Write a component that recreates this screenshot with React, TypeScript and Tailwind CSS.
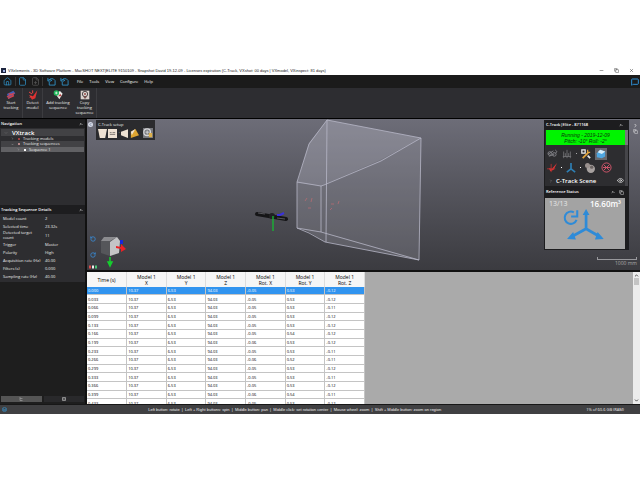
import React from "react";
import { ChevronDown, ChevronLeft, ChevronRight, ChevronUp, Eye, File, FilePlus, Home, Layers, MessageSquare, Minus, RotateCcw, RotateCw, X, Copy } from "lucide-react";

const details = [
  { label: "Model count", value: "2" },
  { label: "Selected time", value: "23.32s" },
  { label: "Detected target count", value: "11" },
  { label: "Trigger", value: "Master" },
  { label: "Polarity", value: "High" },
  { label: "Acquisition rate (Hz)", value: "40.00" },
  { label: "Filters (s)", value: "0.000" },
  { label: "Sampling rate (Hz)", value: "40.00" },
];

const columns = [
  ["Time (s)"],
  ["Model 1", "X"],
  ["Model 1", "Y"],
  ["Model 1", "Z"],
  ["Model 1", "Rot. X"],
  ["Model 1", "Rot. Y"],
  ["Model 1", "Rot. Z"],
];

const rows = [
  ["0.000", "10.37", "6.53", "94.03", "-0.05", "0.53", "-0.12"],
  ["0.033", "10.37", "6.53", "94.03", "-0.05", "0.53", "-0.12"],
  ["0.066", "10.37", "6.53", "94.03", "-0.05", "0.53", "-0.11"],
  ["0.099", "10.37", "6.53", "94.03", "-0.05", "0.53", "-0.12"],
  ["0.133", "10.37", "6.53", "94.03", "-0.05", "0.53", "-0.12"],
  ["0.166", "10.37", "6.53", "94.03", "-0.05", "0.54", "-0.12"],
  ["0.199", "10.37", "6.53", "94.03", "-0.06", "0.53", "-0.12"],
  ["0.233", "10.37", "6.53", "94.03", "-0.05", "0.53", "-0.11"],
  ["0.266", "10.37", "6.53", "94.03", "-0.06", "0.52", "-0.11"],
  ["0.299", "10.37", "6.53", "94.03", "-0.05", "0.53", "-0.12"],
  ["0.333", "10.37", "6.53", "94.03", "-0.05", "0.53", "-0.11"],
  ["0.366", "10.37", "6.53", "94.03", "-0.05", "0.53", "-0.12"],
  ["0.399", "10.37", "6.53", "94.03", "-0.06", "0.54", "-0.11"],
  ["0.433", "10.37", "6.53", "94.03", "-0.05", "0.53", "-0.12"],
];

const TitleBar = () => (
  <header className="flex h-[9px] shrink-0 items-center bg-white pl-px text-[#222]">
    <span className="flex size-[5px] items-center justify-center bg-[#1d2540]">
      <span className="size-[2px] bg-[#9fb2e0]" />
    </span>
    <h1 className="ml-[2px] whitespace-nowrap font-['Liberation_Sans',sans-serif]">
      VXelements - 3D Software Platform - MacSHOT NEXT|ELITE 9150109 - Snapshot David 19-12-09 - Licenses expiration (C-Track, VXshot: 00 days | VXmodel, VXinspect: 81 days)
    </h1>
    <div className="ml-auto flex gap-[10px] pr-[6px]">
      <button aria-label="Minimize"><Minus size={5} /></button>
      <button aria-label="Restore"><Copy size={5} /></button>
      <button aria-label="Close"><X size={5} /></button>
    </div>
  </header>
);

const SessionIcon = () => (
  <svg viewBox="0 0 20 20" className="size-[9px]" fill="none" stroke="#2f8fc4" strokeWidth="2">
    <path d="M7 4h7l4 4v10H5v-7" />
    <path d="M2 2v7h7M2 8c3-4 7-3 9 1" />
  </svg>
);

const MenuBar = () => (
  <nav className="flex h-[13px] shrink-0 items-center bg-[#1b1b1b] pl-[3px] text-white">
    <button aria-label="Home" className="text-[#2f8fc4]"><Home size={9} /></button>
    <span className="ml-[3px] h-[9px] w-px bg-[#393939]" />
    <button aria-label="New" className="ml-[2px] text-[#2f8fc4]"><File size={9} /></button>
    <button aria-label="Save" className="ml-[4px] text-[#555]"><FilePlus size={9} /></button>
    <span className="ml-[2px] h-[9px] w-px bg-[#393939]" />
    <button aria-label="Import session" className="ml-[4px]"><SessionIcon /></button>
    <button aria-label="Export session" className="ml-[4px]"><SessionIcon /></button>
    <div className="ml-[8px] flex gap-[6px]">
      <button>File</button>
      <button>Tools</button>
      <button>View</button>
      <button>Configure</button>
      <button>Help</button>
    </div>
    <button aria-label="Feedback" className="ml-auto pr-px text-[#2f8fd4]"><MessageSquare size={8} strokeWidth={3} /></button>
  </nav>
);

const Ribbon = () => (
  <div className="flex h-[31px] shrink-0 border-b border-black bg-[#2d2d31] text-center leading-[5px] text-[#eee]">
    <button className="flex w-[23px] flex-col items-center border-r border-[#3c3c40] pt-[2px]">
      <svg viewBox="0 0 30 30" className="size-[10px]">
        <path d="M3 12 22 2l6 8-20 17z" fill="#3e60b8" />
        <path d="M3 21 25 9M8 11l14 4M6 25l18-8" stroke="#d5434d" strokeWidth="4" />
      </svg>
      Start<br />tracking
    </button>
    <button className="flex w-[20px] flex-col items-center border-r border-[#3c3c40] pt-[2px]">
      <svg viewBox="0 0 30 30" className="size-[10px]">
        <path d="M3 15 15 19 28 1 22 25 12 29z" fill="#dd3232" />
        <path d="M3 6l9 6m2-11v9m-9 12 6-3" stroke="#e84242" strokeWidth="3" />
      </svg>
      Detect<br />model
    </button>
    <button className="flex w-[30px] flex-col items-center pt-[2px]">
      <svg viewBox="0 0 30 30" className="size-[10px]">
        <path d="m7 11 14-8 8 8-10 17z" fill="#ecece9" />
        <circle cx="10" cy="9" r="8" fill="#20b65a" />
        <path d="M10 5v8M6 9h8" stroke="white" strokeWidth="2" />
        <path d="m15 19 7-8 4 8z" fill="#b44545" />
      </svg>
      Add tracking<br />sequence
    </button>
    <button className="flex w-[24px] flex-col items-center border-r border-[#3c3c40] pt-[2px]">
      <svg viewBox="0 0 30 30" className="size-[10px]">
        <path d="M2 2h26v26H2z" fill="#d7d1cc" />
        <circle cx="15" cy="12" r="8" fill="none" stroke="#574f4d" strokeWidth="3" />
        <path d="m9 19 6 8 7-8" fill="#77514d" />
        <circle cx="15" cy="12" r="3" fill="#984e4b" />
      </svg>
      Copy<br />tracking<br />sequence
    </button>
  </div>
);

const PanelHeader = ({ title }: { title: string }) => (
  <div className="flex h-[9px] shrink-0 items-center justify-between bg-[#1d1d1f] pl-px pr-[2px] font-semibold text-white">
    <h2>{title}</h2>
    <button aria-label={`Collapse ${title}`}><ChevronUp size={4} strokeWidth={4} /></button>
  </div>
);

const Sidebar = () => (
  <aside className="flex w-[85px] shrink-0 flex-col bg-[#1e1e1e] text-[#eee]">
    <PanelHeader title="Navigation" />
    <div className="h-[77px] shrink-0 bg-[#2d2d30] px-px pt-px">
      <div className="flex h-[7px] items-center bg-[#424245] pl-[3px] text-[6px] font-semibold text-white">
        <ChevronDown size={4} className="mr-[4px] text-[#888]" />VXtrack
      </div>
      <div className="flex h-[5px] items-center pl-[10px]">
        <ChevronRight size={3} className="mr-[4px]" />
        <span className="mr-[3px] size-[2px] rounded-full bg-[#c84848]" />Tracking models
      </div>
      <div className="flex h-[6px] items-center bg-[#424245] pl-[10px]">
        <ChevronDown size={3} className="mr-[4px]" />
        <span className="mr-[3px] size-[2px] rounded-full bg-[#e0a0a0]" />Tracking sequences
      </div>
      <div className="flex h-[5px] items-center bg-[#616164] pl-[16px]">
        <ChevronRight size={3} className="mr-[4px]" />
        <span className="mr-[3px] size-[2px] bg-white" />Sequence 1
      </div>
    </div>
    <PanelHeader title="Tracking Sequence Details" />
    <dl className="bg-[#2d2d30] pb-[2px] pl-[3px]">
      {details.map((item) => (
        <div key={item.label} className="flex min-h-[8px] items-center leading-[5px]">
          <dt className="w-[42px] pr-[2px]">
            {item.label === "Detected target count" ? <>Detected target<br />count</> : item.label}
          </dt>
          <dd>{item.value}</dd>
        </div>
      ))}
    </dl>
    <div className="mb-[2px] mt-auto flex gap-[2px] px-px">
      <button aria-label="Tree" className="flex h-[6px] flex-1 items-center justify-center bg-[#555]">
        <svg viewBox="0 0 8 8" className="size-[4px]" fill="none" stroke="#999" strokeWidth="1.5"><path d="M2 0v7h5M2 3h5" /></svg>
      </button>
      <button aria-label="Layers" className="flex h-[6px] flex-1 items-center justify-center bg-[#29292b]">
        <svg viewBox="0 0 8 8" className="size-[4px]" fill="none" stroke="#aaa" strokeWidth="1.5"><path d="M1 1h6v6H1zM1 4h6" /></svg>
      </button>
    </div>
  </aside>
);

const TrackSetup = () => (
  <div className="flex h-[20px] w-[59px] flex-col bg-[#2b2b2e] px-[2px] pt-[2px] text-[#eee]">
    <span className="leading-[5px]">C-Track setup</span>
    <div className="mt-px flex items-center justify-between">
      <button aria-label="Front view"><svg viewBox="0 0 10 10" className="size-[9px]"><path d="M0 0h10L8 10H2z" fill="#eee1d2" /></svg></button>
      <button aria-label="Top view"><svg viewBox="0 0 10 10" className="size-[9px]"><path d="M0 0h10v10H0z" fill="#eee1d2" /><path d="M2 4h2m1 0h3M2 6h6" stroke="#78706c" /></svg></button>
      <span className="text-white">·</span>
      <button aria-label="Side view"><svg viewBox="0 0 8 10" className="h-[9px] w-[7px]"><path d="M8 0v10L0 7V3z" fill="#eee1d2" /></svg></button>
      <button aria-label="Perspective"><svg viewBox="0 0 10 10" className="size-[9px]"><path d="m1 3 5-3 4 7-9 3z" fill="#dda431" /><path d="m1 3 5-3-4 7z" fill="#eee1d2" /></svg></button>
      <button aria-label="Lock volume" className="ml-[3px] bg-[#77787d]"><svg viewBox="0 0 12 12" className="size-[10px]"><circle cx="5" cy="5" r="4" fill="none" stroke="#d7d7da" strokeWidth="1.5" /><path d="M3 5h5M5 3v5" stroke="#ddd" /><path d="M7 6h4v5H7z" fill="#ddb14b" /></svg></button>
    </div>
  </div>
);

const Axes = () => (
  <svg viewBox="0 0 64 50" className="h-[34px] w-[44px]" fill="none" stroke="#2e8bd8">
    <path d="M38 29V7M38 29 18 40M38 29l19 11" strokeWidth="4" />
    <path d="m33 9 5-9 5 9zM19 34l-9 10 13 1zM55 34l9 10-13 1z" fill="#2e8bd8" stroke="none" />
    <path d="M20 5a9 9 0 1 0 4 11" strokeWidth="3" />
    <path d="M16 11h9V2" strokeWidth="3" />
  </svg>
);

const DevicePanel = () => (
  <section className="w-[85px] bg-[#1d1d1f] px-px text-white">
    <div className="flex h-[10px] items-center justify-between pl-px pr-[5px]">
      <h2 className="font-semibold">C-Track|Elite - 871168</h2>
      <button aria-label="Collapse device"><ChevronUp size={4} strokeWidth={4} /></button>
    </div>
    <div className="flex">
      <div className="flex-1 bg-[#2d2d30] pl-px">
        <div className="h-[15px] bg-[#00f400] pt-[2px] text-center font-['Liberation_Sans',sans-serif] text-[5px] italic text-[#0c300c]">
          Running - 2019-12-09<br />Pitch: -10° Roll: -2°
        </div>
        <div className="flex h-[15px] items-center gap-[4px] pl-px pt-[2px]">
          <button aria-label="Calibrate"><svg viewBox="0 0 12 10" className="h-[9px] w-[11px]" fill="none" stroke="#85858a"><path d="m1 6 6-4M2 8l6-2M9 1l2 2-2 2" /><circle cx="3" cy="5" r="2" /><circle cx="8" cy="6" r="2" /></svg></button>
          <button aria-label="Sensors"><svg viewBox="0 0 12 12" className="size-[10px]" fill="none" stroke="#737377"><path d="M2 3v8M10 3v8M6 1v10M1 9h10M4 5v4M8 5v4" /></svg></button>
          <span className="size-px bg-[#aaa]" />
          <button aria-label="Settings">
            <svg viewBox="0 0 12 12" className="size-[10px]" fill="none">
              <path d="M1 1h4v4H1z" stroke="#eee" strokeWidth="1.5" />
              <path d="m2 11 7-7" stroke="#e1a43d" strokeWidth="2" />
              <path d="M8 1v3h3" stroke="#e1a43d" strokeWidth="1.5" />
              <path d="m8 8 3 3" stroke="#eee" strokeWidth="2" />
            </svg>
          </button>
          <button aria-label="Volume" className="bg-[#68686d] p-px"><svg viewBox="0 0 12 12" className="size-[10px]"><path d="m1 5 4-4 6 2v6l-4 2-6-1z" fill="#4fa6e0" /><path d="m5 1 6 2-4 3-5-2z" fill="#d8eefa" /></svg></button>
        </div>
        <div className="flex h-[15px] items-center gap-[4px] pl-px">
          <button aria-label="Detect model"><svg viewBox="0 0 12 12" className="size-[10px]"><path d="m2 6 4 1 6-7-4 8-4 2z" fill="#e23535" /><path d="M5 1v10M0 7h10" stroke="#b53131" /></svg></button>
          <span className="size-px bg-white" />
          <button aria-label="Axes"><svg viewBox="0 0 12 12" className="size-[10px]"><path d="M6 0v7L1 11M6 7l5 4" stroke="#2e7fb4" strokeWidth="2" fill="none" /></svg></button>
          <span className="size-px bg-white" />
          <button aria-label="Ball bar"><svg viewBox="0 0 12 12" className="size-[10px]"><circle cx="7" cy="7" r="5" fill="#a7a19f" /><circle cx="3" cy="3" r="3" fill="#99908e" /><circle cx="8" cy="5" r="2" fill="#6b6463" /></svg></button>
          <button aria-label="Targets" className="ml-[2px]"><svg viewBox="0 0 12 12" className="size-[11px]" fill="none" stroke="#d8566c"><circle cx="6" cy="6" r="5" /><path d="M3 3l6 6M9 3 3 9M2 6h8" /></svg></button>
        </div>
        <div className="flex h-[11px] items-center pl-[3px] text-[6px] font-semibold">
          <ChevronRight size={4} className="mr-[3px] text-[#aaa]" />C-Track Scene
          <button aria-label="Show scene" className="ml-auto pr-px"><Eye size={7} /></button>
        </div>
      </div>
      <div className="w-[3px] bg-[#454549]"><div className="h-[15px] bg-[#77777b]" /></div>
    </div>
    <div className="flex h-[12px] items-center pl-px pr-[4px]">
      <h2 className="font-semibold">Reference Status</h2>
      <button aria-label="Collapse reference" className="ml-auto"><ChevronUp size={4} strokeWidth={4} /></button>
      <button aria-label="Detach" className="ml-[4px]"><Copy size={5} /></button>
    </div>
    <div className="mr-[3px] h-[51px] bg-[#a3a3a3] px-[4px] pt-px">
      <div className="flex h-[9px] items-center justify-between">
        <span className="text-[7px] text-[#e7e7e7]">13/13</span>
        <span className="text-[8px] font-semibold">16.60m³</span>
      </div>
      <div className="flex justify-center pr-[6px] pt-px"><Axes /></div>
    </div>
    <div className="h-px" />
  </section>
);

const Scene = () => (
  <svg viewBox="0 0 553 151" preserveAspectRatio="xMinYMin slice" className="absolute inset-0 h-full w-full">
    <path d="M240 1 334 19 332 141 238 123 222 113 210 108V64l12-40z" fill="#c6c4d3" fillOpacity=".22" />
    <path d="M240 1 334 19 293 41 234 67 210 64V64l12-40z" fill="#d2d0dd" fillOpacity=".13" />
    <g fill="none" stroke="#b8b7c8" strokeWidth=".8">
      <path d="M240 1 334 19 332 141 238 123 222 114 210 109V63l12-38zM240 1l-1 122M210 63l24 4v46l-24-4M234 67l3-1 57-24 40-23M234 113l98 28" />
    </g>
    <path d="m218 82 2-3m4 4 1-4m-4 10h3m20-4h3m-4 6 2-2m6-4 1-3" stroke="#c06c72" strokeWidth=".7" />
    <path d="m170 95 29 5" stroke="#151517" strokeWidth="4" strokeLinecap="round" />
    <path d="m171 94 7 1m12 4 8 1" stroke="#55555a" strokeWidth="1" />
    <circle cx="185" cy="97" r="3" fill="#202023" />
    <path d="M190 96h3l4-2" stroke="#3a31dc" strokeWidth="2" />
    <path d="M186 97v15" stroke="#15bb32" strokeWidth="1.3" />
    {/* orientation cube */}
    <path d="m14 122 3-4h13l3 4-1 12-9 3-9-3z" fill="#55565a" />
    <path d="m14 122 3-4h13l-7 4z" fill="#8b8b8f" />
    <path d="m23 123 7-5 3 4-1 12-9 3z" fill="#c4c4c6" />
    <path d="M33 121h3v4h-3z" fill="#1825dc" />
    <path d="m29 127 5 1v-3l5 5-5 3v-3l-5-1z" fill="#ec2024" />
    <path d="M23 138v5m-2 0 2 4 2-4z" fill="#16ce2e" stroke="#16ce2e" strokeWidth="1.5" />
    <path d="M2 148h2" stroke="#df4b4b" strokeWidth="3" />
    <path d="M5 148h2" stroke="#eee" strokeWidth="3" />
    <path d="M8 148h2" stroke="#4bc678" strokeWidth="3" />
  </svg>
);

const Viewport = () => (
  <section className="relative flex h-[151px] shrink-0 overflow-hidden bg-linear-to-b from-[#6d6d78] to-[#3b3b40]">
    <Scene />
    <button aria-label="Hide toolbar" className="relative ml-px mt-[3px] size-[5px] rounded-full bg-[#d5d9e5] text-[#22345c]"><ChevronLeft size={5} /></button>
    <div className="relative ml-[3px] mt-px"><TrackSetup /></div>
    <div className="absolute left-[3px] top-[117px] flex flex-col gap-[10px] text-[#3a8fdc]">
      <button aria-label="Rotate left"><RotateCcw size={6} strokeWidth={3} /></button>
      <button aria-label="Rotate right"><RotateCw size={6} strokeWidth={3} /></button>
    </div>
    <div className="relative ml-auto mr-[2px] mt-px"><DevicePanel /></div>
    <div className="relative mt-px flex w-[9px] shrink-0 flex-col items-center gap-px pt-[3px] text-white">
      <button aria-label="Hide panel"><ChevronRight size={5} strokeWidth={3} /></button>
      <button aria-label="Dock panel"><Copy size={5} /></button>
    </div>
    <div className="absolute bottom-[4px] right-[3px] flex w-[40px] flex-col text-right leading-[5px] text-[#aaa]">
      <div className="mb-px h-[3px] border-x border-b border-[#98989c]" />
      <span className="text-[5px]">1000 mm</span>
    </div>
  </section>
);

const DataTable = () => (
  <div className="flex min-h-0 flex-1 bg-[#aaa]">
    <div className="min-h-0 overflow-hidden">
      <table className="h-[136px] w-[278px] table-fixed border-collapse bg-white text-black">
        <thead>
          <tr className="h-[15px] bg-[#f6f6f6]">
            {columns.map((lines, i) => (
              <th key={i} className="border-r border-[#ddd] p-0 text-[5px] font-normal leading-[6px]">
                {lines.map((line) => <div key={line}>{line}</div>)}
              </th>
            ))}
          </tr>
        </thead>
        <tbody>
          {rows.map((row, i) => (
            <tr key={row[0]} className={i === 0 ? "bg-[#3194ef] text-white" : ""}>
              {row.map((value, j) => (
                <td key={j} className="border-b border-r border-[#c4c4c4] p-0 pl-px leading-[5px]">{value}</td>
              ))}
            </tr>
          ))}
        </tbody>
      </table>
    </div>
    <div className="ml-auto flex w-[7px] flex-col items-center justify-between bg-[#ececec] py-px text-[#333]">
      <div className="flex w-full flex-col items-center">
        <ChevronUp size={5} strokeWidth={4} />
        <div className="h-[7px] w-[5px] bg-[#c4c4c4]" />
      </div>
      <ChevronDown size={5} strokeWidth={4} />
    </div>
  </div>
);

const App = () => {
  return (
    <div className="h-screen bg-white py-[66px] font-['Open_Sans',sans-serif] text-[4px] leading-[6px]">
      <div className="flex h-full flex-col overflow-hidden">
        <TitleBar />
        <MenuBar />
        <Ribbon />
        <main className="flex min-h-0 flex-1 gap-[2px] bg-[#111]">
          <Sidebar />
          <div className="flex min-w-0 flex-1 flex-col gap-[2px]">
            <Viewport />
            <DataTable />
          </div>
        </main>
        <footer className="flex h-[10px] shrink-0 items-center border-t border-[#171717] bg-[#404042] px-[2px] text-[#eee]">
          <span className="w-[23%] text-[#3a98d4]"><Layers size={5} strokeWidth={3} /></span>
          <p className="whitespace-pre font-['Liberation_Sans',sans-serif]">Left button: rotate  |  Left + Right buttons: spin  |  Middle button: pan  |  Middle click: set rotation center  |  Mouse wheel: zoom  |  Shift + Middle button: zoom on region</p>
          <span className="ml-auto pr-[14px]">1% of 60.6 GB (RAM)</span>
        </footer>
      </div>
    </div>
  );
};

export default App;
